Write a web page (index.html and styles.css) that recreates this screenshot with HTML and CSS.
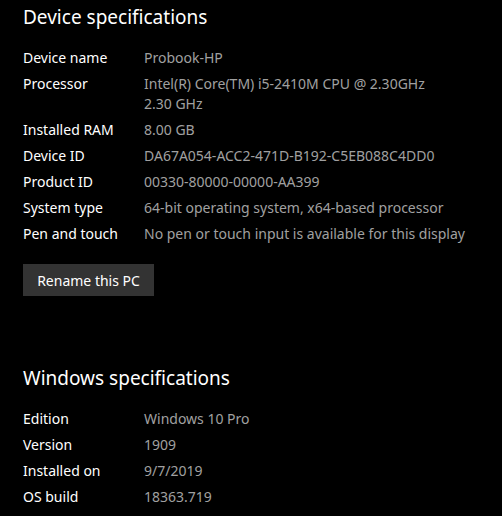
FILE: index.html
```html
<!DOCTYPE html>
<html>
<head>
<meta charset="utf-8">
<link rel="stylesheet" href="styles.css">
</head>
<body>
<main class="page">
  <section class="section">
    <h2 class="title">Device specifications</h2>
    <dl class="specs">
      <dt>Device name</dt><dd>Probook-HP</dd>
      <dt>Processor</dt><dd>Intel(R) Core(TM) i5-2410M CPU @ 2.30GHz<br>2.30 GHz</dd>
      <dt>Installed RAM</dt><dd>8.00 GB</dd>
      <dt>Device ID</dt><dd>DA67A054-ACC2-471D-B192-C5EB088C4DD0</dd>
      <dt>Product ID</dt><dd>00330-80000-00000-AA399</dd>
      <dt>System type</dt><dd>64-bit operating system, x64-based processor</dd>
      <dt>Pen and touch</dt><dd>No pen or touch input is available for this display</dd>
    </dl>
    <button class="btn">Rename this PC</button>
  </section>
  <section class="section">
    <h2 class="title">Windows specifications</h2>
    <dl class="specs">
      <dt>Edition</dt><dd>Windows 10 Pro</dd>
      <dt>Version</dt><dd>1909</dd>
      <dt>Installed on</dt><dd>9/7/2019</dd>
      <dt>OS build</dt><dd>18363.719</dd>
    </dl>
  </section>
</main>
</body>
</html>
```

FILE: styles.css
```css
html, body {
  margin: 0;
  padding: 0;
  background: #000;
}
.page {
  padding: 0 0 0 23px;
  font-family: "Noto Sans", "Open Sans", sans-serif;
  color: #fff;
}
.section {
  display: flex;
  flex-direction: column;
  align-items: flex-start;
}
.title {
  margin: 0;
  padding-top: 3px;
  font-size: 19px;
  font-weight: 400;
  line-height: 28px;
  height: 27px;
}
.specs {
  margin: 18px 0 0 0;
  display: grid;
  grid-template-columns: 121px auto;
  row-gap: 6px;
  font-size: 14px;
  line-height: 20px;
}
.specs dt {
  color: #fff;
}
.specs dd {
  margin: 0;
  color: #a0a0a0;
}
.btn {
  margin-top: 20px;
  margin-bottom: 65px;
  width: 131px;
  height: 32px;
  padding: 0;
  border: none;
  background: #333;
  color: #fff;
  font-family: inherit;
  font-size: 14px;
}
```
